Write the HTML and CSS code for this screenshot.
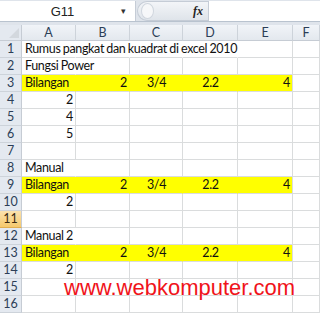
FILE: index.html
```html
<!DOCTYPE html>
<html lang="id">
<head>
<meta charset="UTF-8">
<title>Rumus pangkat</title>
<link rel="stylesheet" href="styles.css">
</head>
<body>
<div class="formula-bar">
  <div class="name-box">
    <span class="name-text">G11</span>
    <span class="name-arrow">&#9662;</span>
  </div>
  <div class="fx-area">
    <span class="fx-knob"></span>
    <span class="fx">fx</span>
  </div>
  <div class="formula-input"></div>
</div>
<div class="sheet">
  <div class="corner"><span class="corner-tri"></span></div>
  <div class="col-head">A</div>
  <div class="col-head">B</div>
  <div class="col-head">C</div>
  <div class="col-head">D</div>
  <div class="col-head">E</div>
  <div class="col-head">F</div>

  <div class="row-head">1</div>
  <div class="cell overflow">Rumus pangkat dan kuadrat di excel 2010</div>
  <div class="cell spill"></div><div class="cell spill"></div><div class="cell spill"></div><div class="cell"></div><div class="cell"></div>

  <div class="row-head">2</div>
  <div class="cell overflow">Fungsi Power</div>
  <div class="cell"></div><div class="cell"></div><div class="cell"></div><div class="cell"></div><div class="cell"></div>

  <div class="row-head">3</div>
  <div class="cell hl">Bilangan</div>
  <div class="cell hl num">2</div>
  <div class="cell hl mid">3/4</div>
  <div class="cell hl mid">2.2</div>
  <div class="cell hl num last">4</div>
  <div class="cell"></div>

  <div class="row-head">4</div>
  <div class="cell num">2</div>
  <div class="cell"></div><div class="cell"></div><div class="cell"></div><div class="cell"></div><div class="cell"></div>

  <div class="row-head">5</div>
  <div class="cell num">4</div>
  <div class="cell"></div><div class="cell"></div><div class="cell"></div><div class="cell"></div><div class="cell"></div>

  <div class="row-head">6</div>
  <div class="cell num">5</div>
  <div class="cell"></div><div class="cell"></div><div class="cell"></div><div class="cell"></div><div class="cell"></div>

  <div class="row-head">7</div>
  <div class="cell"></div><div class="cell"></div><div class="cell"></div><div class="cell"></div><div class="cell"></div><div class="cell"></div>

  <div class="row-head">8</div>
  <div class="cell overflow">Manual</div>
  <div class="cell"></div><div class="cell"></div><div class="cell"></div><div class="cell"></div><div class="cell"></div>

  <div class="row-head">9</div>
  <div class="cell hl">Bilangan</div>
  <div class="cell hl num">2</div>
  <div class="cell hl mid">3/4</div>
  <div class="cell hl mid">2.2</div>
  <div class="cell hl num last">4</div>
  <div class="cell"></div>

  <div class="row-head">10</div>
  <div class="cell num">2</div>
  <div class="cell"></div><div class="cell"></div><div class="cell"></div><div class="cell"></div><div class="cell"></div>

  <div class="row-head active">11</div>
  <div class="cell"></div><div class="cell"></div><div class="cell"></div><div class="cell"></div><div class="cell"></div><div class="cell"></div>

  <div class="row-head">12</div>
  <div class="cell overflow">Manual 2</div>
  <div class="cell"></div><div class="cell"></div><div class="cell"></div><div class="cell"></div><div class="cell"></div>

  <div class="row-head">13</div>
  <div class="cell hl">Bilangan</div>
  <div class="cell hl num">2</div>
  <div class="cell hl mid">3/4</div>
  <div class="cell hl mid">2.2</div>
  <div class="cell hl num last">4</div>
  <div class="cell"></div>

  <div class="row-head">14</div>
  <div class="cell num">2</div>
  <div class="cell"></div><div class="cell"></div><div class="cell"></div><div class="cell"></div><div class="cell"></div>

  <div class="row-head">15</div>
  <div class="cell"></div><div class="cell"></div><div class="cell"></div><div class="cell"></div><div class="cell"></div><div class="cell"></div>

  <div class="row-head">16</div>
  <div class="cell"></div><div class="cell"></div><div class="cell"></div><div class="cell"></div><div class="cell"></div><div class="cell"></div>
</div>
<div class="watermark">www.webkomputer.com</div>
</body>
</html>
```

FILE: styles.css
```css
body {
  margin: 0;
  width: 320px;
  height: 313px;
  overflow: hidden;
  background-color: #dfe4eb;
  font-family: 'Liberation Sans', Arial, sans-serif;
  position: relative;
}
.formula-bar {
  display: flex;
  height: 20px;
  margin-top: 1px;
  border-bottom: 1px solid #b9c3cf;
  margin-bottom: 3px;
}
.name-box {
  width: 135px;
  background-color: #fff;
  display: flex;
  align-items: center;
  border-right: 1px solid #c5ccd6;
}
.name-text {
  flex: 1;
  text-align: center;
  font-size: 13px;
  color: #222;
  padding-left: 4px;
}
.name-arrow {
  font-size: 9px;
  color: #333;
  width: 14px;
}
.fx-area {
  width: 71px;
  display: flex;
  align-items: center;
  justify-content: space-between;
  background: linear-gradient(#f3f5f8, #dfe4ea);
  border-radius: 10px 0 0 10px;
  border: 1px solid #c5ccd6;
  border-right: none;
  margin-left: 1px;
  box-sizing: border-box;
  padding: 0 5px 0 3px;
}
.fx-knob {
  width: 11px;
  height: 14px;
  border-radius: 50%;
  border: 1px solid #d0d6de;
  background: #f6f7f9;
}
.fx {
  font-family: 'Liberation Serif', serif;
  font-style: italic;
  font-weight: bold;
  font-size: 12px;
  color: #222;
}
.formula-input {
  flex: 1;
  background-color: #fff;
  border-left: 1px solid #c5ccd6;
}
.sheet {
  display: grid;
  grid-template-columns: 22px 54px 54px 53px 55px 55px 27px;
  grid-template-rows: 16px;
  grid-auto-rows: 17px;
  background-color: #fff;
  font-family: Lato, 'Liberation Sans', sans-serif;
  font-size: 12.5px;
  letter-spacing: -0.35px;
  word-spacing: -0.5px;
  color: #111;
}
.corner {
  background-color: #e4e9f0;
  border-right: 1px solid #c6ccd4;
  border-bottom: 1px solid #c6ccd4;
  box-sizing: border-box;
  position: relative;
}
.corner-tri {
  position: absolute;
  right: 2px;
  bottom: 2px;
  width: 0;
  height: 0;
  border-left: 10px solid transparent;
  border-bottom: 10px solid #d3d8de;
}
.col-head {
  background: linear-gradient(#f1f4f8, #e3e8ee);
  border-right: 1px solid #cdd3da;
  border-bottom: 1px solid #c6ccd4;
  box-sizing: border-box;
  text-align: center;
  font-size: 12.5px;
  letter-spacing: 0;
  line-height: 15px;
  color: #2c3e57;
}
.row-head {
  background-color: #e4e9f0;
  border-right: 1px solid #c6ccd4;
  border-bottom: 1px solid #cdd3da;
  box-sizing: border-box;
  text-align: center;
  font-size: 12.5px;
  letter-spacing: 0;
  line-height: 16px;
  color: #2c3e57;
}
.row-head.active {
  background: linear-gradient(#fbe2ae, #f5c96d);
  border-bottom-color: #e0ae4f;
  color: #3a2a10;
}
.cell {
  border-right: 1px solid #dadcdd;
  border-bottom: 1px solid #dadcdd;
  box-sizing: border-box;
  line-height: 16px;
  padding: 0 2px 0 3px;
  white-space: nowrap;
}
.cell.overflow {
  overflow: visible;
  border-right-color: transparent;
}
.cell.spill {
  border-right-color: transparent;
}
.cell.num {
  text-align: right;
}
.cell.mid {
  text-align: center;
}
.cell.hl {
  background-color: #ffff00;
  border-right-color: #ffff00;
}
.cell.hl.last {
  border-right-color: #dadcdd;
}
.watermark {
  position: absolute;
  left: 64px;
  top: 278px;
  font-size: 22px;
  line-height: 20px;
  color: #f0131a;
}
```
